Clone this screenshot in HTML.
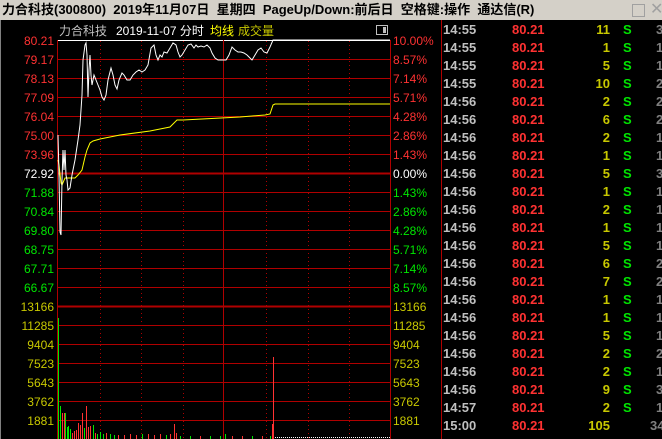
<!DOCTYPE html>
<html><head><meta charset="utf-8"><style>
body{margin:0;width:662px;height:439px;overflow:hidden;background:#000;font-family:"Liberation Sans","Noto Sans CJK SC",sans-serif}
#tb{position:absolute;left:0;top:0;width:662px;height:20px;background:#d4d0c8;font-weight:bold;font-size:13px;line-height:20px;color:#000;white-space:nowrap}
svg{position:absolute;left:0;top:0}
</style></head><body>
<svg width="662" height="439" xmlns="http://www.w3.org/2000/svg" font-family="Liberation Sans, Noto Sans CJK SC, sans-serif">
<rect x="0" y="20" width="662" height="419" fill="#000"/>
<rect x="0" y="20" width="1" height="419" fill="#808080"/>
<g stroke="#b00000" stroke-width="1">
<line x1="57" y1="40.5" x2="390" y2="40.5" stroke="#fff"/>
<line x1="57" y1="59.5" x2="390" y2="59.5"/><line x1="57" y1="78.5" x2="390" y2="78.5"/>
<line x1="57" y1="97.5" x2="390" y2="97.5"/><line x1="57" y1="116.5" x2="390" y2="116.5"/>
<line x1="57" y1="135.5" x2="390" y2="135.5"/><line x1="57" y1="154.5" x2="390" y2="154.5"/>
<line x1="57" y1="173.5" x2="390" y2="173.5" stroke-width="2"/>
<line x1="57" y1="192.5" x2="390" y2="192.5"/><line x1="57" y1="211.5" x2="390" y2="211.5"/>
<line x1="57" y1="230.5" x2="390" y2="230.5"/><line x1="57" y1="249.5" x2="390" y2="249.5"/>
<line x1="57" y1="268.5" x2="390" y2="268.5"/><line x1="57" y1="287.5" x2="390" y2="287.5"/>
<line x1="57" y1="306.5" x2="390" y2="306.5" stroke-width="2"/>
<line x1="57" y1="325.5" x2="390" y2="325.5"/><line x1="57" y1="344.5" x2="390" y2="344.5"/>
<line x1="57" y1="363.5" x2="390" y2="363.5"/><line x1="57" y1="382.5" x2="390" y2="382.5"/>
<line x1="57" y1="401.5" x2="390" y2="401.5"/><line x1="57" y1="420.5" x2="390" y2="420.5"/>
<line x1="57.5" y1="40" x2="57.5" y2="439"/><line x1="223.5" y1="40" x2="223.5" y2="439"/>
<line x1="390.5" y1="40" x2="390.5" y2="439"/>
<line x1="441.5" y1="20" x2="441.5" y2="439"/>
<g stroke-dasharray="1,3">
<line x1="100.5" y1="41" x2="100.5" y2="439"/><line x1="141.5" y1="41" x2="141.5" y2="439"/>
<line x1="183.5" y1="41" x2="183.5" y2="439"/><line x1="266.5" y1="41" x2="266.5" y2="439"/>
<line x1="308.5" y1="41" x2="308.5" y2="439"/><line x1="349.5" y1="41" x2="349.5" y2="439"/>
</g></g>
<g font-size="12">
<text x="59" y="35" fill="#c0c0c0">力合科技</text>
<text x="116" y="35" fill="#fff">2019-11-07 分时</text>
<text x="210" y="35" fill="#ffff00">均线</text>
<text x="238" y="35" fill="#c8c800">成交量</text>
</g>
<rect x="376.5" y="25.5" width="11" height="9" fill="none" stroke="#c0c0c0"/><rect x="383" y="27" width="3" height="6" fill="#c0c0c0"/>
<g font-size="12" text-anchor="end">
<text x="54" y="45" fill="#ff3232">80.21</text><text x="54" y="64" fill="#ff3232">79.17</text>
<text x="54" y="83" fill="#ff3232">78.13</text><text x="54" y="102" fill="#ff3232">77.09</text>
<text x="54" y="121" fill="#ff3232">76.04</text><text x="54" y="140" fill="#ff3232">75.00</text>
<text x="54" y="159" fill="#ff3232">73.96</text><text x="54" y="178" fill="#fff">72.92</text>
<text x="54" y="197" fill="#00e600">71.88</text><text x="54" y="216" fill="#00e600">70.84</text>
<text x="54" y="235" fill="#00e600">69.80</text><text x="54" y="254" fill="#00e600">68.75</text>
<text x="54" y="273" fill="#00e600">67.71</text><text x="54" y="292" fill="#00e600">66.67</text>
<g fill="#c8c800"><text x="54" y="311">13166</text><text x="54" y="330">11285</text><text x="54" y="349">9404</text><text x="54" y="368">7523</text><text x="54" y="387">5643</text><text x="54" y="406">3762</text><text x="54" y="425">1881</text></g>
</g>
<g font-size="12">
<g fill="#ff3232"><text x="393" y="45">10.00%</text><text x="393" y="64">8.57%</text><text x="393" y="83">7.14%</text><text x="393" y="102">5.71%</text><text x="393" y="121">4.28%</text><text x="393" y="140">2.86%</text><text x="393" y="159">1.43%</text></g>
<text x="393" y="178" fill="#fff">0.00%</text>
<g fill="#00e600"><text x="393" y="197">1.43%</text><text x="393" y="216">2.86%</text><text x="393" y="235">4.28%</text><text x="393" y="254">5.71%</text><text x="393" y="273">7.14%</text><text x="393" y="292">8.57%</text></g>
<g fill="#c8c800"><text x="393" y="311">13166</text><text x="393" y="330">11285</text><text x="393" y="349">9404</text><text x="393" y="368">7523</text><text x="393" y="387">5643</text><text x="393" y="406">3762</text><text x="393" y="425">1881</text></g>
</g>
<polyline fill="none" stroke="#ffff00" stroke-width="1" points="58,160 59,165 61,183 62,185 65,178 75,178 78,175 82,170 85,157 87,150 90,143 93,141 100,139 120,135 150,131 170,127 177,120 183,120 240,117 265,115 270,114 273,105 275,104 390,104"/>
<polyline fill="none" stroke="#fff" stroke-width="1" points="58,135 59,175 60,232 61,235 62,180 63,150 64,170 65,150 66,175 67,180 68,190 70,188 72,175 75,160 78,140 80,125 82,95 83,60 85,45 86,43 87,55 88,97 89,70 90,55 91,75 92,85 94,75 96,80 98,85 100,90 102,97 104,100 106,95 108,80 111,68 113,75 115,85 117,89 119,80 122,73 124,75 127,80 130,80 133,75 136,72 139,70 142,72 145,70 148,65 151,48 154,45 156,55 158,60 160,55 162,57 164,52 167,53 170,48 173,43 176,45 178,52 180,57 182,55 185,50 188,45 191,44 194,48 196,45 198,47 201,46 204,47 207,45 210,48 212,53 215,58 218,60 222,60 226,60 229,55 232,47 235,50 238,52 241,52 244,53 247,55 250,58 252,60 255,55 258,50 261,48 264,52 267,53 270,47 273,40 390,40"/>
<g>
<rect x="58" y="318" width="1" height="121" fill="#00e600"/>
<rect x="60" y="406" width="1" height="33" fill="#00e600"/>
<rect x="62" y="413" width="1" height="26" fill="#ff3232"/>
<rect x="64" y="413" width="1" height="26" fill="#ff3232"/>
<rect x="65" y="413" width="1" height="26" fill="#00e600"/>
<rect x="67" y="427" width="1" height="12" fill="#00e600"/>
<rect x="68" y="426" width="1" height="13" fill="#00e600"/>
<rect x="70" y="429" width="1" height="10" fill="#00e600"/>
<rect x="72" y="433" width="1" height="6" fill="#ff3232"/>
<rect x="74" y="431" width="1" height="8" fill="#ff3232"/>
<rect x="76" y="430" width="1" height="9" fill="#ff3232"/>
<rect x="78" y="423" width="1" height="16" fill="#ff3232"/>
<rect x="80" y="425" width="1" height="14" fill="#ff3232"/>
<rect x="82" y="413" width="1" height="26" fill="#ff3232"/>
<rect x="84" y="428" width="1" height="11" fill="#00e600"/>
<rect x="86" y="406" width="1" height="33" fill="#ff3232"/>
<rect x="88" y="427" width="1" height="12" fill="#ff3232"/>
<rect x="90" y="426" width="1" height="13" fill="#ff3232"/>
<rect x="93" y="425" width="1" height="14" fill="#00e600"/>
<rect x="95" y="433" width="1" height="6" fill="#ff3232"/>
<rect x="97" y="434" width="1" height="5" fill="#00e600"/>
<rect x="100" y="432" width="1" height="7" fill="#00e600"/>
<rect x="103" y="434" width="1" height="5" fill="#00e600"/>
<rect x="106" y="433" width="1" height="6" fill="#ff3232"/>
<rect x="110" y="434" width="1" height="5" fill="#00e600"/>
<rect x="114" y="435" width="1" height="4" fill="#00e600"/>
<rect x="118" y="435" width="1" height="4" fill="#ff3232"/>
<rect x="124" y="435" width="1" height="4" fill="#ff3232"/>
<rect x="130" y="434" width="1" height="5" fill="#ff3232"/>
<rect x="136" y="435" width="1" height="4" fill="#ff3232"/>
<rect x="142" y="434" width="1" height="5" fill="#00e600"/>
<rect x="148" y="434" width="1" height="5" fill="#ff3232"/>
<rect x="154" y="435" width="1" height="4" fill="#ff3232"/>
<rect x="160" y="434" width="1" height="5" fill="#ff3232"/>
<rect x="166" y="435" width="1" height="4" fill="#00e600"/>
<rect x="170" y="434" width="1" height="5" fill="#ff3232"/>
<rect x="174" y="424" width="1" height="15" fill="#ff3232"/>
<rect x="176" y="433" width="1" height="6" fill="#ff3232"/>
<rect x="180" y="436" width="1" height="3" fill="#00e600"/>
<rect x="190" y="436" width="1" height="3" fill="#00e600"/>
<rect x="200" y="436" width="1" height="3" fill="#ff3232"/>
<rect x="210" y="436" width="1" height="3" fill="#00e600"/>
<rect x="220" y="436" width="1" height="3" fill="#00e600"/>
<rect x="225" y="434" width="1" height="5" fill="#00e600"/>
<rect x="232" y="436" width="1" height="3" fill="#ff3232"/>
<rect x="242" y="436" width="1" height="3" fill="#ff3232"/>
<rect x="252" y="436" width="1" height="3" fill="#00e600"/>
<rect x="262" y="436" width="1" height="3" fill="#ff3232"/>
<rect x="270" y="436" width="1" height="3" fill="#00e600"/>
<rect x="272" y="424" width="1" height="15" fill="#ff3232"/>
<rect x="273" y="357" width="1" height="82" fill="#ff3232"/>
<line x1="275" y1="437.5" x2="390" y2="437.5" stroke="#fff" stroke-dasharray="1,1"/>
</g>
<g font-size="13" font-weight="bold">
<g fill="#c0c0c0"><text x="443" y="34">14:55</text><text x="443" y="52">14:55</text><text x="443" y="70">14:55</text><text x="443" y="88">14:55</text><text x="443" y="106">14:56</text><text x="443" y="124">14:56</text><text x="443" y="142">14:56</text><text x="443" y="160">14:56</text><text x="443" y="178">14:56</text><text x="443" y="196">14:56</text><text x="443" y="214">14:56</text><text x="443" y="232">14:56</text><text x="443" y="250">14:56</text><text x="443" y="268">14:56</text><text x="443" y="286">14:56</text><text x="443" y="304">14:56</text><text x="443" y="322">14:56</text><text x="443" y="340">14:56</text><text x="443" y="358">14:56</text><text x="443" y="376">14:56</text><text x="443" y="394">14:56</text><text x="443" y="412">14:57</text><text x="443" y="430">15:00</text></g>
<g fill="#ff3232"><text x="512" y="34">80.21</text><text x="512" y="52">80.21</text><text x="512" y="70">80.21</text><text x="512" y="88">80.21</text><text x="512" y="106">80.21</text><text x="512" y="124">80.21</text><text x="512" y="142">80.21</text><text x="512" y="160">80.21</text><text x="512" y="178">80.21</text><text x="512" y="196">80.21</text><text x="512" y="214">80.21</text><text x="512" y="232">80.21</text><text x="512" y="250">80.21</text><text x="512" y="268">80.21</text><text x="512" y="286">80.21</text><text x="512" y="304">80.21</text><text x="512" y="322">80.21</text><text x="512" y="340">80.21</text><text x="512" y="358">80.21</text><text x="512" y="376">80.21</text><text x="512" y="394">80.21</text><text x="512" y="412">80.21</text><text x="512" y="430">80.21</text></g>
<g fill="#c8c800" text-anchor="end"><text x="610" y="34">11</text><text x="610" y="52">1</text><text x="610" y="70">5</text><text x="610" y="88">10</text><text x="610" y="106">2</text><text x="610" y="124">6</text><text x="610" y="142">2</text><text x="610" y="160">1</text><text x="610" y="178">5</text><text x="610" y="196">1</text><text x="610" y="214">2</text><text x="610" y="232">1</text><text x="610" y="250">5</text><text x="610" y="268">6</text><text x="610" y="286">7</text><text x="610" y="304">1</text><text x="610" y="322">1</text><text x="610" y="340">5</text><text x="610" y="358">2</text><text x="610" y="376">2</text><text x="610" y="394">9</text><text x="610" y="412">2</text><text x="610" y="430">105</text></g>
<g fill="#00e600"><text x="623" y="34">S</text><text x="623" y="52">S</text><text x="623" y="70">S</text><text x="623" y="88">S</text><text x="623" y="106">S</text><text x="623" y="124">S</text><text x="623" y="142">S</text><text x="623" y="160">S</text><text x="623" y="178">S</text><text x="623" y="196">S</text><text x="623" y="214">S</text><text x="623" y="232">S</text><text x="623" y="250">S</text><text x="623" y="268">S</text><text x="623" y="286">S</text><text x="623" y="304">S</text><text x="623" y="322">S</text><text x="623" y="340">S</text><text x="623" y="358">S</text><text x="623" y="376">S</text><text x="623" y="394">S</text><text x="623" y="412">S</text></g>
<g fill="#808080"><text x="656" y="34">3</text><text x="656" y="52">1</text><text x="656" y="70">1</text><text x="656" y="88">2</text><text x="656" y="106">2</text><text x="656" y="124">2</text><text x="656" y="142">1</text><text x="656" y="160">1</text><text x="656" y="178">3</text><text x="656" y="196">1</text><text x="656" y="214">1</text><text x="656" y="232">1</text><text x="656" y="250">1</text><text x="656" y="268">2</text><text x="656" y="286">2</text><text x="656" y="304">1</text><text x="656" y="322">1</text><text x="656" y="340">1</text><text x="656" y="358">2</text><text x="656" y="376">1</text><text x="656" y="394">3</text><text x="656" y="412">1</text><text x="650" y="430">34</text></g>
</g>
</svg>
<div id="tb"><span style="position:absolute;left:2px">力合科技(300800)&nbsp; 2019年11月07日&nbsp; 星期四&nbsp; PageUp/Down:前后日&nbsp; 空格键:操作&nbsp; 通达信(R)</span>
<span style="position:absolute;left:632px;top:4px;width:11px;height:11px;border:1px solid #a0a0a0"></span>
<span style="position:absolute;left:650px;top:0;color:#a0a0a0;font-weight:normal;font-size:16px">✕</span></div>
</body></html>
